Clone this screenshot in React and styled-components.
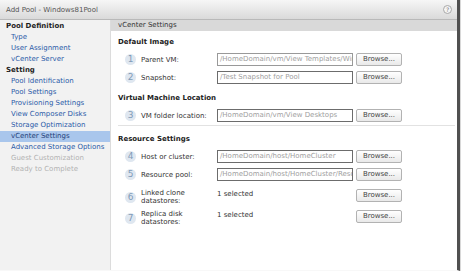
import React from "react";
import styled, { createGlobalStyle } from "styled-components";

const GlobalStyle = createGlobalStyle`
  html, body {
    margin: 0;
    padding: 0;
    background: #ffffff;
  }
  body {
    font-family: Tahoma, "DejaVu Sans", sans-serif;
    font-size: 7px;
    color: #333;
  }
`;

const nav = [
  { label: "Pool Definition", kind: "head" },
  { label: "Type" },
  { label: "User Assignment" },
  { label: "vCenter Server" },
  { label: "Setting", kind: "head" },
  { label: "Pool Identification" },
  { label: "Pool Settings" },
  { label: "Provisioning Settings" },
  { label: "View Composer Disks" },
  { label: "Storage Optimization" },
  { label: "vCenter Settings", kind: "active" },
  { label: "Advanced Storage Options" },
  { label: "Guest Customization", kind: "off" },
  { label: "Ready to Complete", kind: "off" },
];

const App = () => {
  return (
    <>
      <GlobalStyle />
      <Frame>
        <Window>
          <TitleBar>
            <span>Add Pool - Windows81Pool</span>
            <Help>?</Help>
          </TitleBar>
          <Body>
            <Nav>
              {nav.map((item) => (
                <NavItem key={item.label} $kind={item.kind}>
                  {item.label}
                </NavItem>
              ))}
            </Nav>
            <Main>
              <Header>vCenter Settings</Header>
              <Content>
                <Heading>Default Image</Heading>
                <Row>
                  <Marker>
                    <Step>1</Step>
                    <Label>Parent VM:</Label>
                  </Marker>
                  <Field $light>/HomeDomain/vm/View Templates/Wir</Field>
                  <Button>Browse...</Button>
                </Row>
                <Row>
                  <Marker>
                    <Step>2</Step>
                    <Label>Snapshot:</Label>
                  </Marker>
                  <Field>/Test Snapshot for Pool</Field>
                  <Button>Browse...</Button>
                </Row>

                <Heading $gap={9}>Virtual Machine Location</Heading>
                <Row>
                  <Marker>
                    <Step>3</Step>
                    <Label>VM folder location:</Label>
                  </Marker>
                  <Field>/HomeDomain/vm/View Desktops</Field>
                  <Button>Browse...</Button>
                </Row>

                <Divider />

                <Heading $gap={8}>Resource Settings</Heading>
                <Row>
                  <Marker>
                    <Step>4</Step>
                    <Label>Host or cluster:</Label>
                  </Marker>
                  <Field>/HomeDomain/host/HomeCluster</Field>
                  <Button>Browse...</Button>
                </Row>
                <Row>
                  <Marker>
                    <Step>5</Step>
                    <Label>Resource pool:</Label>
                  </Marker>
                  <Field>/HomeDomain/host/HomeCluster/Reso</Field>
                  <Button>Browse...</Button>
                </Row>
                <Row $tall $gap={8}>
                  <Marker>
                    <Step>6</Step>
                    <Label>
                      Linked clone
                      <br />
                      datastores:
                    </Label>
                  </Marker>
                  <Value>1 selected</Value>
                  <Button>Browse...</Button>
                </Row>
                <Row $tall>
                  <Marker>
                    <Step>7</Step>
                    <Label>
                      Replica disk
                      <br />
                      datastores:
                    </Label>
                  </Marker>
                  <Value>1 selected</Value>
                  <Button>Browse...</Button>
                </Row>
              </Content>
            </Main>
          </Body>
        </Window>
      </Frame>
    </>
  );
};

const Frame = styled.div`
  width: 461px;
  height: 271px;
  box-sizing: border-box;
  padding-right: 1px;
  background: #d8d8d8;
`;

const Window = styled.div`
  height: 270px;
  display: flex;
  flex-direction: column;
  background: #ffffff;
  border-right: 3px solid #505050;
  border-bottom: 1px solid #f8f8f8;
`;

const TitleBar = styled.div`
  height: 19px;
  flex: none;
  display: flex;
  align-items: center;
  justify-content: space-between;
  padding: 0 5px 0 6px;
  background: linear-gradient(#f6f6f6, #dadada);
  border-bottom: 1px solid #b9b9b9;
  color: #555;
  font-size: 7px;
`;

const Help = styled.span`
  width: 7px;
  height: 7px;
  border-radius: 50%;
  border: 1px solid #a8a8a8;
  background: #f4f4f4;
  color: #777;
  font-size: 6px;
  line-height: 7px;
  text-align: center;
`;

const Body = styled.div`
  flex: 1;
  display: flex;
  min-height: 0;
`;

const Nav = styled.div`
  width: 110px;
  flex: none;
  padding-top: 1px;
  background: #f2f2f2;
  border-right: 1px solid #dcdcdc;
`;

const NavItem = styled.div`
  height: 11px;
  line-height: 11px;
  white-space: nowrap;
  padding-left: ${(p) => (p.$kind === "head" ? 6 : 11)}px;
  font-weight: ${(p) => (p.$kind === "head" ? 700 : 400)};
  color: ${(p) =>
    p.$kind === "head"
      ? "#1e1e1e"
      : p.$kind === "off"
      ? "#b2b2b2"
      : p.$kind === "active"
      ? "#1f3f78"
      : "#2a5aa8"};
  background: ${(p) => (p.$kind === "active" ? "#a9c6ec" : "transparent")};
`;

const Main = styled.div`
  flex: 1;
  display: flex;
  flex-direction: column;
`;

const Header = styled.div`
  height: 11px;
  line-height: 11px;
  padding-left: 7px;
  background: #d9d9d9;
  color: #333;
`;

const Content = styled.div`
  display: flex;
  flex-direction: column;
  padding: 6px 2px 0 7px;
`;

const Heading = styled.div`
  height: 10px;
  line-height: 10px;
  margin-top: ${(p) => p.$gap || 0}px;
  margin-bottom: 1px;
  font-weight: 700;
  color: #222;
`;

const Row = styled.div`
  display: flex;
  align-items: ${(p) => (p.$tall ? "flex-start" : "center")};
  margin-top: ${(p) => p.$gap || 5}px;
  min-height: 13px;
`;

const Marker = styled.div`
  width: 99px;
  flex: none;
  display: flex;
  align-items: center;
  padding-left: 7px;
  box-sizing: border-box;
`;

const Step = styled.span`
  width: 11px;
  height: 11px;
  flex: none;
  border-radius: 50%;
  background: #dfe7f0;
  color: #7f9bb8;
  font-size: 9px;
  line-height: 11px;
  text-align: center;
`;

const Label = styled.span`
  margin-left: 5px;
  line-height: 8px;
  color: #333;
  white-space: nowrap;
`;

const Field = styled.div`
  width: 136px;
  height: 13px;
  box-sizing: border-box;
  flex: none;
  padding: 0 2px;
  border: 1px solid ${(p) => (p.$light ? "#999" : "#6c6c6c")};
  color: #a0a0a0;
  line-height: 11px;
  white-space: nowrap;
  overflow: hidden;
`;

const Value = styled.div`
  width: 136px;
  flex: none;
  padding: 1px 0 0 0;
  color: #333;
  line-height: 9px;
`;

const Button = styled.div`
  width: 46px;
  height: 13px;
  box-sizing: border-box;
  margin-left: 3px;
  border: 1px solid #b2b2b2;
  border-radius: 2px;
  background: linear-gradient(#ffffff, #e9e9e9);
  color: #444;
  text-align: center;
  line-height: 11px;
`;

const Divider = styled.div`
  height: 1px;
  margin: 3px 0 0 0;
  background: #e2e2e2;
`;

export default App;
